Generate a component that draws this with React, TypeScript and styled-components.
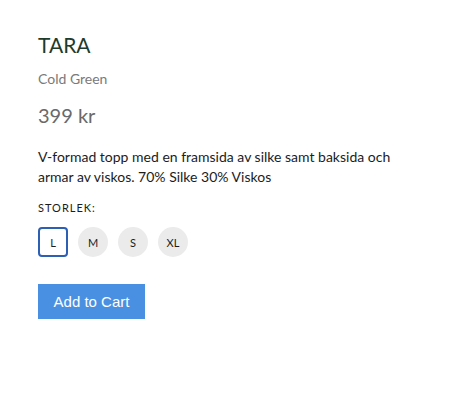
import styled, { createGlobalStyle } from "styled-components";
import { useState } from "react";

const GlobalStyle = createGlobalStyle`
  body {
    margin: 0;
    background: #ffffff;
    font-family: Lato, "Open Sans", sans-serif;
  }
`;

const Page = styled.main`
  padding: 32px 38px;
  box-sizing: border-box;
`;

const Title = styled.h1`
  margin: 0;
  font-size: 21px;
  line-height: 26px;
  font-weight: 400;
  color: #1e3b2b;
`;

const Variant = styled.p`
  margin: 12px 0 0;
  font-size: 14px;
  line-height: 18px;
  color: #7a7a7a;
`;

const Price = styled.p`
  margin: 15px 0 0;
  font-size: 20px;
  line-height: 24px;
  color: #6a6a6a;
`;

const Description = styled.p`
  margin: 20px 0 0;
  max-width: 380px;
  font-size: 14px;
  line-height: 20px;
  color: #1c1c1c;
`;

const SizeLabel = styled.div`
  margin-top: 14px;
  font-size: 11px;
  line-height: 14px;
  letter-spacing: 1px;
  color: #1c1c1c;
`;

const SizeRow = styled.div`
  display: flex;
  gap: 10px;
  margin-top: 12px;
`;

const SizeButton = styled.button<{ $active: boolean }>`
  width: 30px;
  height: 30px;
  padding: 0;
  display: flex;
  align-items: center;
  justify-content: center;
  font-family: Lato, "Open Sans", sans-serif;
  font-size: 11px;
  color: #1c1c1c;
  cursor: pointer;
  box-sizing: border-box;
  border: ${({ $active }) => ($active ? "2px solid #2d5fb4" : "none")};
  border-radius: ${({ $active }) => ($active ? "4px" : "50%")};
  background: ${({ $active }) => ($active ? "#ffffff" : "#ebebeb")};
`;

const CartButton = styled.button`
  margin-top: 27px;
  width: 107px;
  height: 35px;
  border: none;
  background: #4a90e2;
  color: #ffffff;
  font-family: "Liberation Sans", Arial, sans-serif;
  font-size: 15px;
  cursor: pointer;
`;

const sizes = ["L", "M", "S", "XL"];

export default function App() {
  const [size, setSize] = useState("L");

  return (
    <>
      <GlobalStyle />
      <Page>
        <Title>TARA</Title>
        <Variant>Cold Green</Variant>
        <Price>399 kr</Price>
        <Description>
          V-formad topp med en framsida av silke samt baksida och armar av
          viskos. 70% Silke 30% Viskos
        </Description>
        <SizeLabel>STORLEK:</SizeLabel>
        <SizeRow>
          {sizes.map((s) => (
            <SizeButton key={s} $active={s === size} onClick={() => setSize(s)}>
              {s}
            </SizeButton>
          ))}
        </SizeRow>
        <CartButton>Add to Cart</CartButton>
      </Page>
    </>
  );
}
